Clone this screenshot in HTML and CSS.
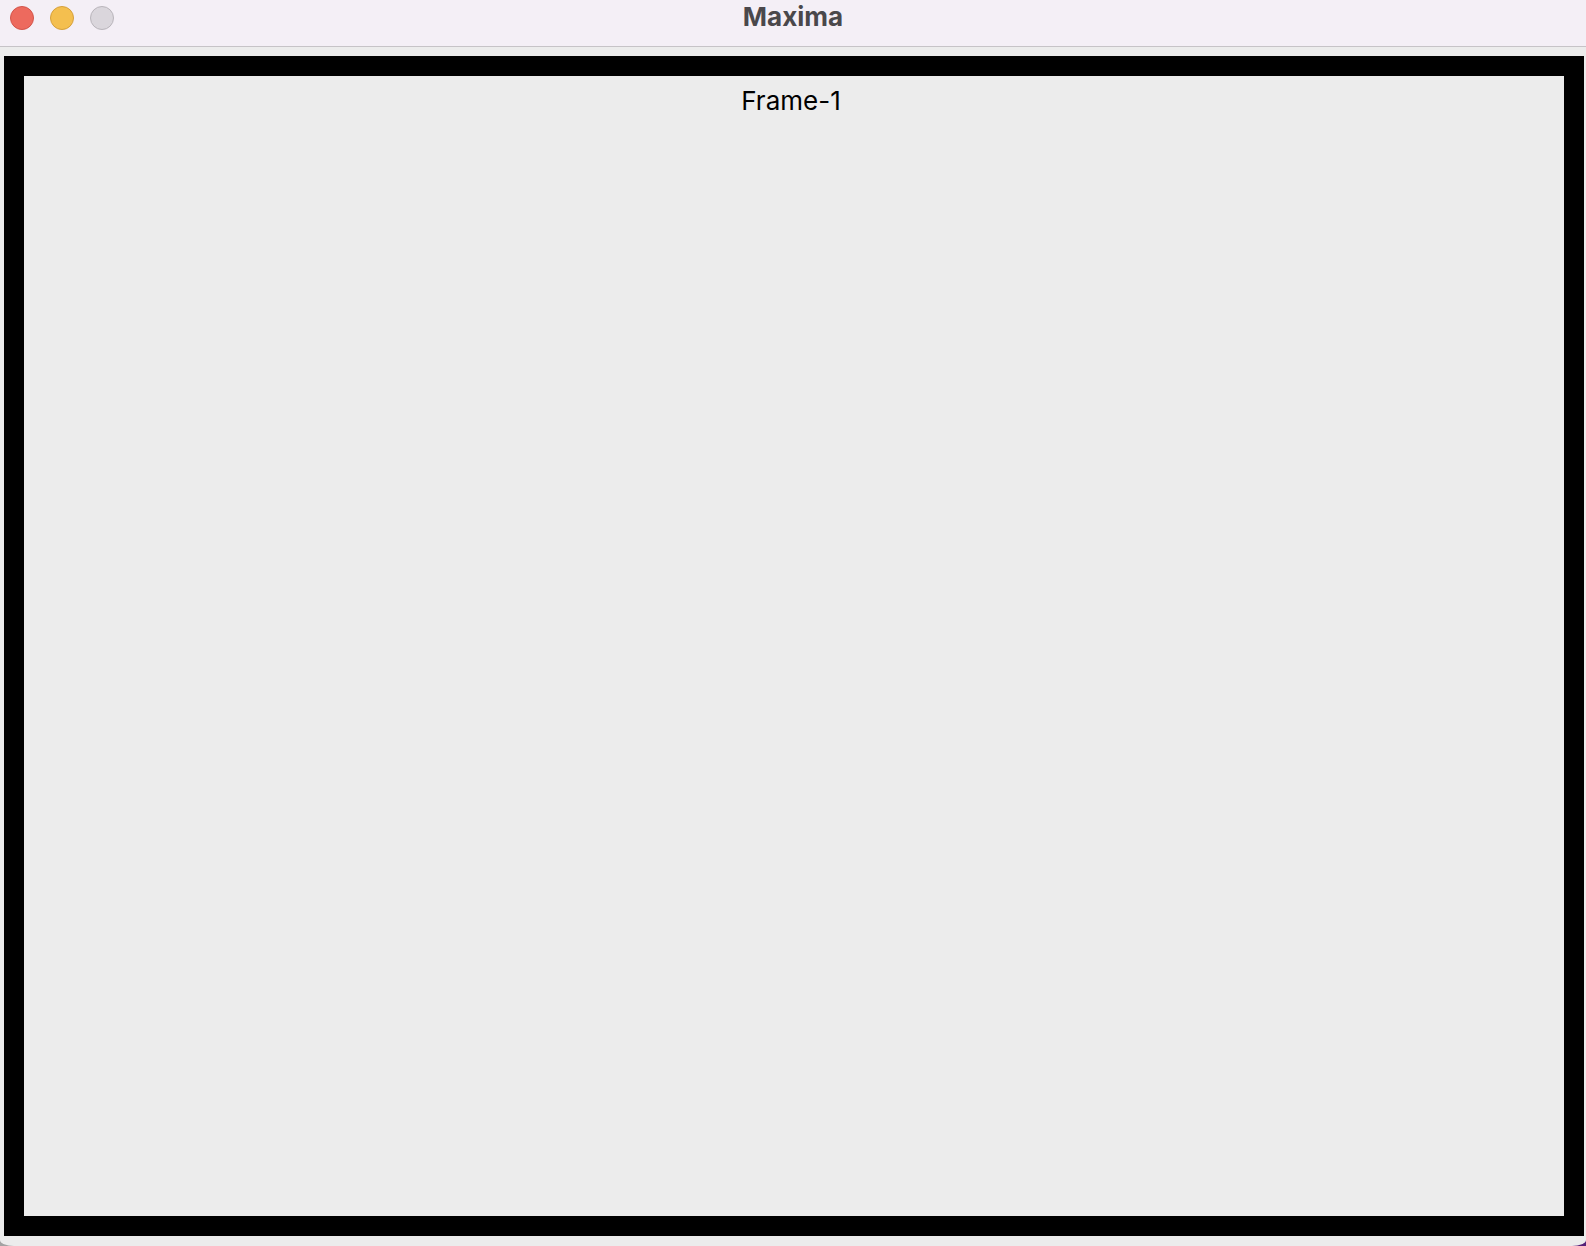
FILE: index.html
```html
<!DOCTYPE html>
<html lang="en">
<head>
<meta charset="utf-8">
<meta name="viewport" content="width=device-width, initial-scale=1">
<title>Maxima</title>
<link rel="stylesheet" href="styles.css">
</head>
<body>
<div class="window">
  <header class="titlebar">
    <div class="controls">
      <button class="control close" type="button" aria-label="Close"></button>
      <button class="control minimize" type="button" aria-label="Minimize"></button>
      <button class="control zoom" type="button" aria-label="Zoom" disabled></button>
    </div>
    <h1 class="title">Maxima</h1>
  </header>
  <main class="content">
    <section class="frame">
      <p class="label">Frame-1</p>
    </section>
  </main>
</div>
</body>
</html>
```

FILE: styles.css
```css
* {
  box-sizing: border-box;
}

body {
  margin: 0;
  background: linear-gradient(to right, #a3a3a3 50%, #542078 50%);
  font-family: Inter, "Liberation Sans", sans-serif;
  font-size: 26px;
  line-height: 34px;
}

.window {
  display: flex;
  flex-direction: column;
  min-height: 100vh;
  overflow: hidden;
  background: #ececec;
  border-radius: 0 0 14px 14px / 0 0 6px 6px;
}

.titlebar {
  display: grid;
  grid-template-columns: 1fr auto 1fr;
  height: 47px;
  padding: 0 10px;
  background: #f4eff6;
  border-bottom: 1px solid #c6c3c7;
}

.controls {
  display: flex;
  gap: 16px;
  padding-top: 6px;
}

.control {
  width: 24px;
  height: 24px;
  padding: 0;
  border: 1px solid;
  border-radius: 50%;
}

.close {
  background: #ed6a5e;
  border-color: #d3554b;
}

.minimize {
  background: #f4bf4f;
  border-color: #d6a03c;
}

.zoom {
  background: #dad6dc;
  border-color: #b9b5bb;
}

.title {
  margin: 0;
  color: #4a484b;
  font-size: inherit;
  font-weight: 700;
}

.content {
  display: flex;
  flex: 1;
  padding: 9px 2px 10px 4px;
}

.frame {
  flex: 1;
  padding: 8px 6px 0 0;
  border: 20px solid #000;
}

.label {
  margin: 0;
  color: #000;
  text-align: center;
}
```
